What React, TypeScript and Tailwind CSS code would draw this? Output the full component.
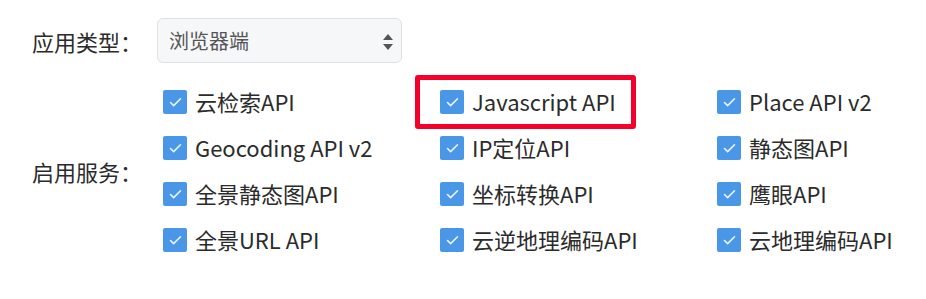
import { Check } from 'lucide-react';

const services = [
  '云检索API',
  'Javascript API',
  'Place API v2',
  'Geocoding API v2',
  'IP定位API',
  '静态图API',
  '全景静态图API',
  '坐标转换API',
  '鹰眼API',
  '全景URL API',
  '云逆地理编码API',
  '云地理编码API',
];

export default function App() {
  return (
    <div
      className="w-[926px] h-[299px] bg-white text-[#2b2b2b] text-[22px]"
      style={{ fontFamily: '"Noto Sans CJK SC", "Noto Sans", sans-serif' }}
    >
      {/* 应用类型 */}
      <div className="flex items-center pt-[18px]">
        <label className="w-[157px] pl-[32px] leading-none">应用类型：</label>
        <div className="relative w-[245px] h-[45px] rounded-[6px] border border-[#dde1e6] bg-[#f6f7f9] flex items-center pl-[11px] text-[20px] text-[#555]">
          浏览器端
          <svg className="absolute right-[7px] top-[14px]" width="12" height="18" viewBox="0 0 12 18">
            <path d="M6 1 L11 7 H1 Z" fill="#555" />
            <path d="M6 17 L11 11 H1 Z" fill="#555" />
          </svg>
        </div>
      </div>

      {/* 启用服务 */}
      <div className="flex items-center mt-[16px]">
        <label className="w-[163px] pl-[32px] leading-none">启用服务：</label>
        <div className="grid grid-cols-[277px_277px_200px]">
          {services.map((name, i) => (
            <div key={name} className="relative h-[46px] flex items-center">
              <span className="w-[24px] h-[24px] rounded-[2px] bg-[#4a97e8] flex items-center justify-center">
                <Check className="w-[15px] h-[15px] text-[#eef4fc]" strokeWidth={2.5} />
              </span>
              <span className="ml-[8px] whitespace-nowrap -translate-y-[1px]">{name}</span>
              {i === 1 && (
                <div className="absolute left-[-25px] top-[-4px] w-[221px] h-[54px] border-[5px] border-[#f5002a] rounded-[3px]" />
              )}
            </div>
          ))}
        </div>
      </div>
    </div>
  );
}
